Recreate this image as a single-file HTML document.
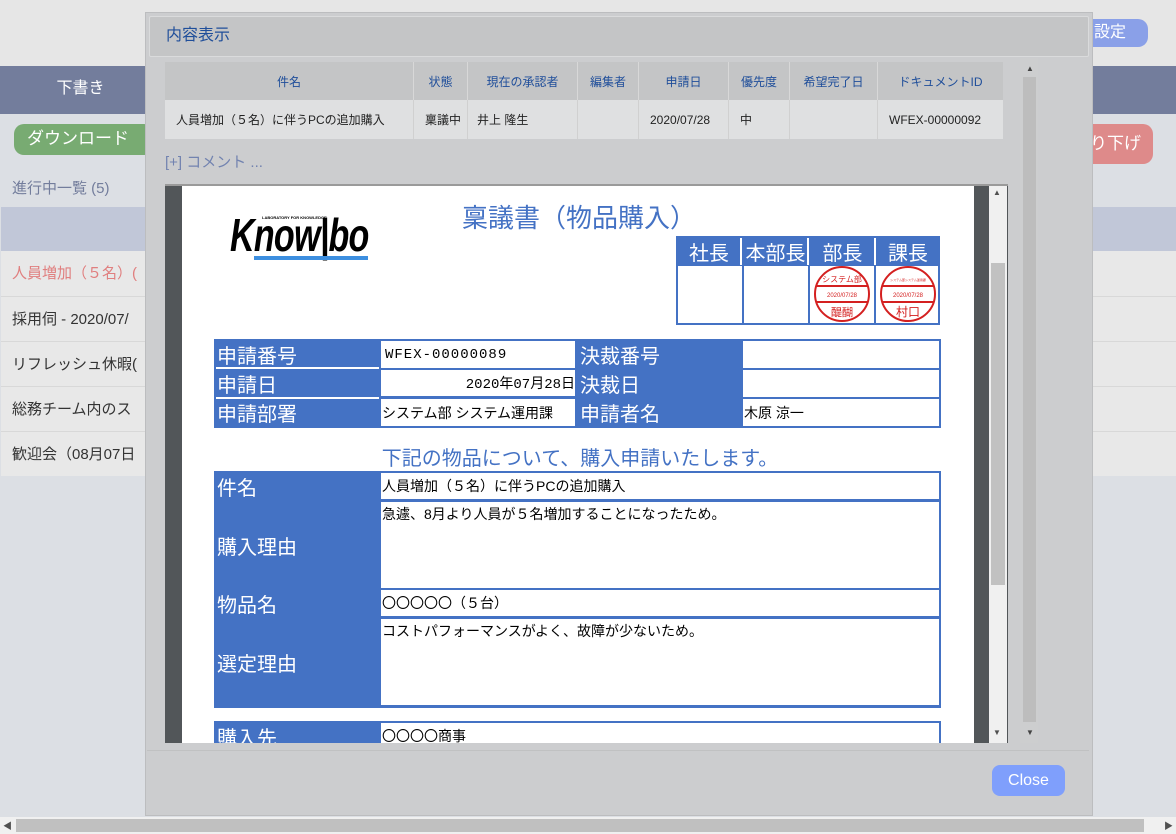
<!DOCTYPE html>
<html><head><meta charset="utf-8">
<style>
*{box-sizing:border-box;margin:0;padding:0}
body{width:1176px;height:834px;overflow:hidden;position:relative;background:#dcdfe4;font-family:"Liberation Sans","Noto Sans CJK JP",sans-serif;}
.a{position:absolute}
.bl{background:#4472c4;color:#fff}
.cell{position:absolute;display:flex;align-items:center;white-space:nowrap;overflow:hidden}
.cj{font-family:"Noto Sans CJK JP",sans-serif}
</style></head><body>
<div class="a" style="left:0;top:0;width:1176px;height:66px;background:#e6e6e6"></div>
<div class="a" style="left:1088px;top:19px;width:60px;height:28px;background:#8aa0e8;border-radius:0 10px 10px 0;color:#fff;font-size:16px;line-height:28px;padding-left:6px">設定</div>
<div class="a" style="left:0;top:66px;width:1176px;height:48px;background:#737d9c"></div>
<div class="a" style="left:0;top:66px;width:145px;height:48px;color:#fff;font-size:16px;line-height:46px;text-align:center;padding-left:16px">下書き</div>
<div class="a" style="left:14px;top:124px;width:140px;height:31px;background:#78ab72;border-radius:10px;color:#fff;font-size:17px;line-height:30px;padding-left:13px">ダウンロード</div>
<div class="a" style="left:1090px;top:124px;width:63px;height:40px;background:#de8a8a;border-radius:0 10px 10px 0;color:#fff;font-size:17px;line-height:40px">り下げ</div>
<div class="a" style="left:12px;top:177px;font-size:15px;color:#737d9c">進行中一覧 (5)</div>
<div class="a" style="left:1px;top:207px;width:1175px;height:44px;background:#c1c7d8"></div>
<div class="a" style="left:1px;top:251px;width:1175px;height:225px;background:#e8e8e8"></div>
<div class="a" style="left:12px;top:262px;font-size:15px;color:#e07f7f">人員増加（５名）(</div>
<div class="a" style="left:1px;top:296px;width:1175px;height:1px;background:#d8d8d8"></div>
<div class="a" style="left:12px;top:308px;font-size:15px;color:#333">採用伺 - 2020/07/</div>
<div class="a" style="left:1px;top:341px;width:1175px;height:1px;background:#d8d8d8"></div>
<div class="a" style="left:12px;top:353px;font-size:15px;color:#333">リフレッシュ休暇(</div>
<div class="a" style="left:1px;top:386px;width:1175px;height:1px;background:#d8d8d8"></div>
<div class="a" style="left:12px;top:398px;font-size:15px;color:#333">総務チーム内のス</div>
<div class="a" style="left:1px;top:431px;width:1175px;height:1px;background:#d8d8d8"></div>
<div class="a" style="left:12px;top:443px;font-size:15px;color:#333">歓迎会（08月07日</div>

<div class="a" style="left:145px;top:12px;width:948px;height:804px;background:#cccdcf;border:1px solid #bcbdbf"></div>
<div class="a" style="left:149px;top:16px;width:940px;height:41px;background:#c4c5c6;border:1px solid #dadbdc;border-radius:2px;font-size:16px;color:#1f4e9a;line-height:38px;padding-left:16px">内容表示</div>
<div class="a" style="left:1020px;top:58px;width:18px;height:685px;background:#cdcecf"></div>
<div class="a" style="left:1023px;top:77px;width:13px;height:645px;background:#bdbdbd"></div>
<div class="a" style="left:1026px;top:64px;font-size:8px;color:#444">▲</div>
<div class="a" style="left:1026px;top:728px;font-size:8px;color:#444">▼</div>
<div class="a" style="left:165px;top:62px;width:838px;height:38px;background:#c4c5c6"></div>
<div class="a" style="left:165px;top:100px;width:838px;height:39px;background:#dfe0e1"></div>
<div class="a" style="font-size:12px;color:#1f4e9a;top:62px;left:0;height:38px;width:1176px">
<div class="cell" style="left:165px;width:249px;height:38px;justify-content:center;border-right:1px solid #d8d8d8">件名</div>
<div class="cell" style="left:414px;width:54px;height:38px;justify-content:center;border-right:1px solid #d8d8d8">状態</div>
<div class="cell" style="left:468px;width:110px;height:38px;justify-content:center;border-right:1px solid #d8d8d8">現在の承認者</div>
<div class="cell" style="left:578px;width:61px;height:38px;justify-content:center;border-right:1px solid #d8d8d8">編集者</div>
<div class="cell" style="left:639px;width:90px;height:38px;justify-content:center;border-right:1px solid #d8d8d8">申請日</div>
<div class="cell" style="left:729px;width:61px;height:38px;justify-content:center;border-right:1px solid #d8d8d8">優先度</div>
<div class="cell" style="left:790px;width:88px;height:38px;justify-content:center;border-right:1px solid #d8d8d8">希望完了日</div>
<div class="cell" style="left:878px;width:125px;height:38px;justify-content:center">ドキュメントID</div>
</div>
<div class="a" style="font-size:12px;color:#222;top:100px;left:0;height:39px;width:1176px">
<div class="cell" style="left:165px;width:249px;height:39px;padding-left:11px;border-right:1px solid #d0d0d0">人員増加（５名）に伴うPCの追加購入</div>
<div class="cell" style="left:414px;width:54px;height:39px;padding-left:11px;border-right:1px solid #d0d0d0">稟議中</div>
<div class="cell" style="left:468px;width:110px;height:39px;padding-left:9px;border-right:1px solid #d0d0d0">井上 隆生</div>
<div class="cell" style="left:578px;width:61px;height:39px;border-right:1px solid #d0d0d0"></div>
<div class="cell" style="left:639px;width:90px;height:39px;padding-left:11px;border-right:1px solid #d0d0d0">2020/07/28</div>
<div class="cell" style="left:729px;width:61px;height:39px;padding-left:11px;border-right:1px solid #d0d0d0">中</div>
<div class="cell" style="left:790px;width:88px;height:39px;border-right:1px solid #d0d0d0"></div>
<div class="cell" style="left:878px;width:125px;height:39px;padding-left:11px">WFEX-00000092</div>
</div>
<div class="a" style="left:165px;top:151px;font-size:15px;color:#7283b0">[+] コメント ...</div>

<div class="a" style="left:165px;top:184px;width:843px;height:559px;background:#525659;border-top:2px solid #9a9a9a"></div>
<div class="a" style="left:989px;top:186px;width:18px;height:557px;background:#f0f0f0"></div>
<div class="a" style="left:991px;top:263px;width:14px;height:322px;background:#c1c1c1"></div>
<div class="a" style="left:993px;top:188px;font-size:8px;color:#505050">▲</div>
<div class="a" style="left:993px;top:728px;font-size:8px;color:#505050">▼</div>
<div class="a" style="left:182px;top:186px;width:792px;height:557px;background:#fff;overflow:hidden">
 <div class="a" style="left:48px;top:27px;width:140px;height:48px">
  <div class="a" style="left:0;top:-2px;font-family:'Liberation Sans',sans-serif;font-weight:bold;font-style:italic;font-size:46px;letter-spacing:-1px;color:#000;line-height:48px;transform:scaleX(0.74);transform-origin:left">Know|bo</div>
  <div class="a" style="left:32px;top:2px;font-size:4px;color:#000;font-weight:bold;white-space:nowrap">LABORATORY FOR KNOWLEDGE</div>
  <div class="a" style="left:24px;top:43px;width:114px;height:4px;background:#3d8fe0"></div>
 </div>
 <div class="a" style="left:0;width:792px;top:12px;text-align:center;font-size:26px;color:#4472c4;padding-left:2px">稟議書（物品購入）</div>
 <div class="a bl" style="left:494px;top:50px;width:264px;height:89px;border:2px solid #4472c4"></div>
 <div class="a" style="left:496px;top:52px;width:260px;font-size:20px;color:#fff;height:27px">
  <div class="cell" style="left:0;width:64px;height:27px;justify-content:center;border-right:2px solid #fff">社長</div>
  <div class="cell" style="left:66px;width:65px;height:27px;justify-content:center;border-right:2px solid #fff">本部長</div>
  <div class="cell" style="left:133px;width:65px;height:27px;justify-content:center;border-right:2px solid #fff">部長</div>
  <div class="cell" style="left:200px;width:60px;height:27px;justify-content:center">課長</div>
 </div>
 <div class="a" style="left:496px;top:80px;width:64px;height:57px;background:#fff"></div>
 <div class="a" style="left:562px;top:80px;width:64px;height:57px;background:#fff"></div>
 <div class="a" style="left:628px;top:80px;width:64px;height:57px;background:#fff"></div>
 <div class="a" style="left:694px;top:80px;width:62px;height:57px;background:#fff"></div>
 <svg class="a" style="left:628px;top:80px" width="130" height="57">
  <g fill="none" stroke="#d42020" stroke-width="2">
   <circle cx="32" cy="28" r="27"/><line x1="6" y1="20" x2="58" y2="20"/><line x1="6" y1="36" x2="58" y2="36"/>
   <circle cx="98" cy="28" r="27"/><line x1="72" y1="20" x2="124" y2="20"/><line x1="72" y1="36" x2="124" y2="36"/>
  </g>
  <g fill="#d42020" font-family="Liberation Sans,Noto Sans CJK JP,sans-serif" text-anchor="middle">
   <text x="32" y="16" font-size="8">システム部</text><text x="32" y="31" font-size="6">2020/07/28</text><text x="32" y="50" font-size="11">醍醐</text>
   <text x="98" y="15" font-size="3">システム部システム運用課</text><text x="98" y="31" font-size="6">2020/07/28</text><text x="98" y="50" font-size="12">村口</text>
  </g>
 </svg>
 <div class="a bl" style="left:32px;top:153px;width:727px;height:89px;border:2px solid #4472c4"></div>
 <div class="cell" style="left:35px;top:155px;font-size:20px;color:#fff;height:27px">申請番号</div>
 <div class="cell" style="left:35px;top:184px;font-size:20px;color:#fff;height:27px">申請日</div>
 <div class="cell" style="left:35px;top:213px;font-size:20px;color:#fff;height:27px">申請部署</div>
 <div class="a" style="left:34px;top:181px;width:163px;height:2px;background:#fff"></div>
 <div class="a" style="left:34px;top:211px;width:163px;height:2px;background:#fff"></div>
 <div class="cell" style="left:199px;top:155px;width:194px;height:27px;background:#fff;font-family:'Liberation Mono',monospace;font-size:14px;padding-left:4px;letter-spacing:1px">WFEX-00000089</div>
 <div class="cell" style="left:199px;top:184px;width:194px;height:26px;background:#fff;font-size:14px;justify-content:flex-end;font-family:'Liberation Mono','Noto Sans CJK JP',monospace">2020年07月28日</div>
 <div class="cell" style="left:199px;top:213px;width:194px;height:27px;background:#fff;font-size:14px;padding-left:1px">システム部 システム運用課</div>
 <div class="cell" style="left:398px;top:155px;font-size:20px;color:#fff;height:27px">決裁番号</div>
 <div class="cell" style="left:398px;top:184px;font-size:20px;color:#fff;height:27px">決裁日</div>
 <div class="cell" style="left:398px;top:213px;font-size:20px;color:#fff;height:27px">申請者名</div>
 <div class="a" style="left:561px;top:155px;width:196px;height:27px;background:#fff"></div>
 <div class="a" style="left:561px;top:184px;width:196px;height:27px;background:#fff"></div>
 <div class="cell" style="left:561px;top:213px;width:196px;height:27px;background:#fff;font-size:14px;padding-left:1px">木原 涼一</div>
 <div class="a" style="left:0;width:792px;top:256px;text-align:center;font-size:20px;color:#4472c4;padding-left:4px">下記の物品について、購入申請いたします。</div>
 <div class="a bl" style="left:32px;top:285px;width:727px;height:237px;border:2px solid #4472c4"></div>
 <div class="cell" style="left:35px;top:287px;height:27px;font-size:20px;color:#fff">件名</div>
 <div class="cell" style="left:199px;top:287px;width:558px;height:26px;background:#fff;font-size:14px;padding-left:1px">人員増加（５名）に伴うPCの追加購入</div>
 <div class="cell" style="left:35px;top:316px;height:86px;font-size:20px;color:#fff">購入理由</div>
 <div class="a" style="left:199px;top:316px;width:558px;height:86px;background:#fff;font-size:14px;padding-left:1px;padding-top:2px">急遽、8月より人員が５名増加することになったため。</div>
 <div class="cell" style="left:35px;top:404px;height:27px;font-size:20px;color:#fff">物品名</div>
 <div class="cell cj" style="left:199px;top:404px;width:558px;height:26px;background:#fff;font-size:14px;padding-left:1px">〇〇〇〇〇（５台）</div>
 <div class="cell" style="left:35px;top:433px;height:87px;font-size:20px;color:#fff">選定理由</div>
 <div class="a" style="left:199px;top:433px;width:558px;height:86px;background:#fff;font-size:14px;padding-left:1px;padding-top:2px">コストパフォーマンスがよく、故障が少ないため。</div>
 <div class="a bl" style="left:32px;top:535px;width:727px;height:60px;border:2px solid #4472c4"></div>
 <div class="cell" style="left:35px;top:537px;height:27px;font-size:20px;color:#fff">購入先</div>
 <div class="cell cj" style="left:199px;top:537px;width:558px;height:40px;background:#fff;font-size:14px;padding-left:1px;align-items:flex-start;padding-top:3px">〇〇〇〇商事</div>
</div>
<div class="a" style="left:147px;top:750px;width:942px;height:1px;background:#c0c1c2"></div>
<div class="a" style="left:992px;top:765px;width:73px;height:31px;background:#7f9ffc;border-radius:8px;color:#fff;font-size:16px;text-align:center;line-height:31px">Close</div>
<div class="a" style="left:0;top:817px;width:1176px;height:17px;background:#f0f0f0"></div>
<div class="a" style="left:16px;top:819px;width:1128px;height:13px;background:#c0c0c0"></div>
<div class="a" style="left:3px;top:819px;font-size:9px;color:#505050">◀</div>
<div class="a" style="left:1164px;top:819px;font-size:9px;color:#505050">▶</div>
</body></html>
